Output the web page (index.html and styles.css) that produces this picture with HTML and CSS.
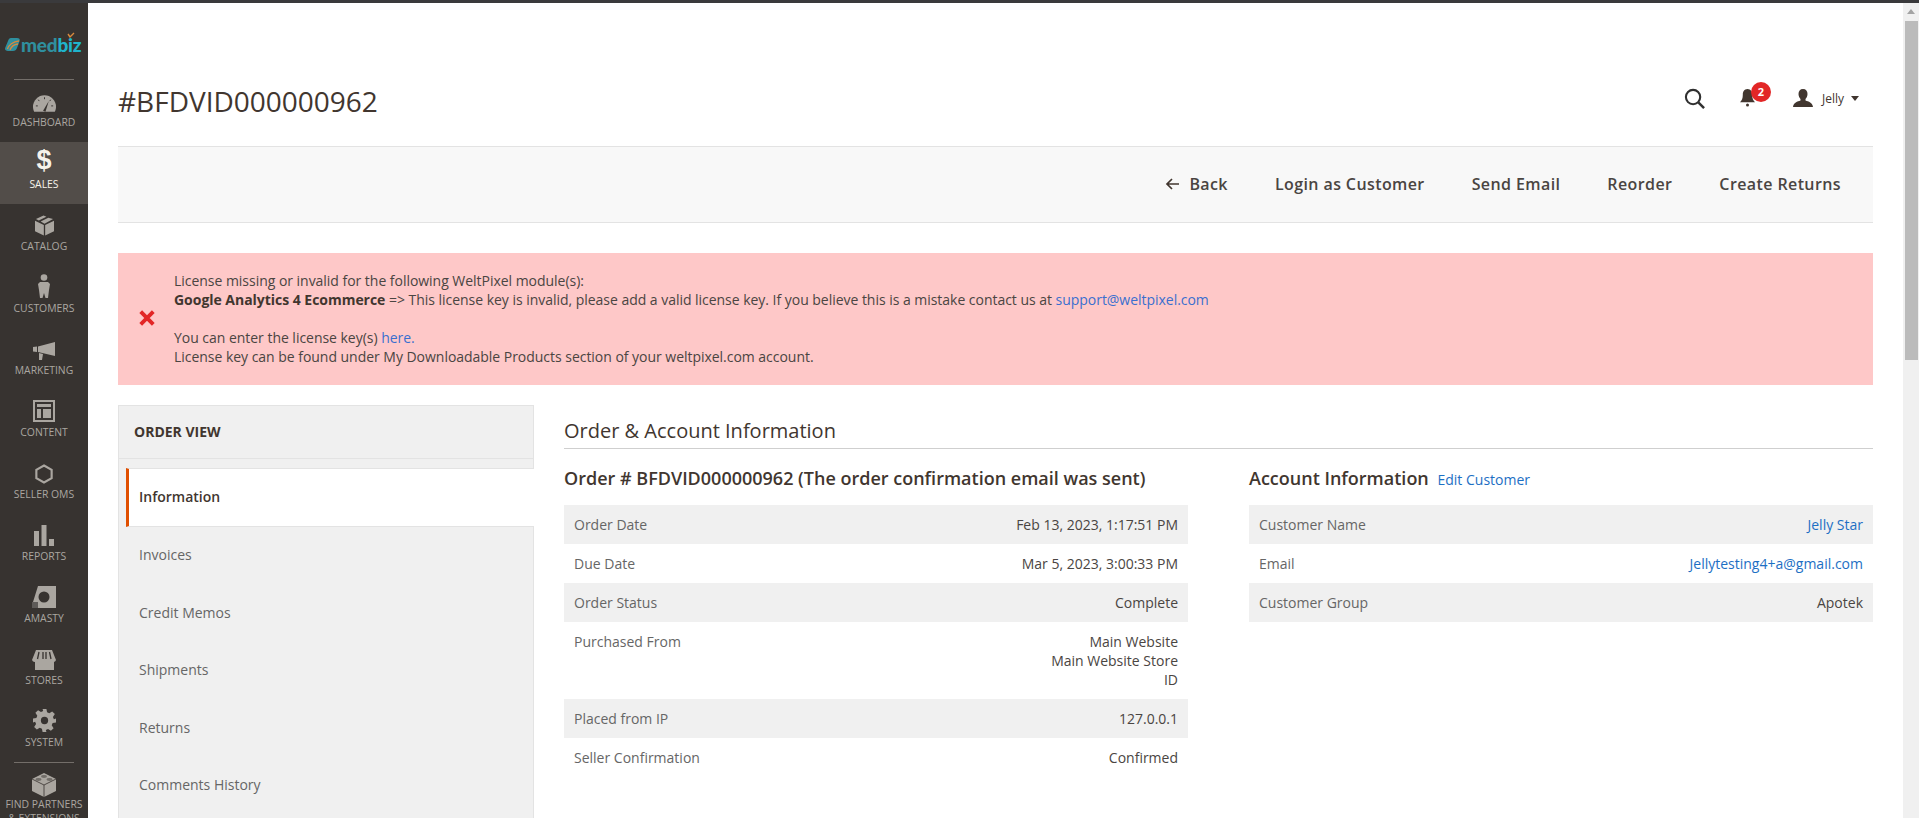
FILE: index.html
```html
<!DOCTYPE html>
<html lang="en">
<head>
<meta charset="utf-8">
<title>#BFDVID000000962</title>
<link rel="stylesheet" href="styles.css">
</head>
<body>
<div class="topline"></div>
<div class="app">
  <nav class="side">
    <div class="logo">
      <svg class="logo-mark" viewBox="0 0 15 13" width="15" height="13"><path d="M6 0h6c2.500 0 3.300 1.500 2.500 3.500L12 10c-.8 2-2 3-4 3H3c-2.500 0-3.500-1.500-2.700-3.500L3 3c.7-2 1.500-3 3-3z" fill="#2f8f9e"/><path d="M2.500 11C3.500 7 8 3.500 14 3M5 12C6 9 9 6.500 13 6" stroke="#d98a3d" stroke-width="1.300" fill="none"/></svg><span class="logo-med">med</span><span class="logo-biz">biz</span>
      <svg class="logo-check" viewBox="0 0 8 6" width="8" height="6"><path d="M1 2l2 3 4-4" stroke="#d98a3d" stroke-width="1.400" fill="none"/></svg>
    </div>
    <div class="rule"></div>
    <a class="nav"><svg viewBox="0 0 24 17" width="23" height="17"><path d="M12 0A12 12 0 0 0 0 12c0 2 .4 3.500 1.200 5h21.600c.8-1.500 1.200-3 1.200-5A12 12 0 0 0 12 0z" fill="#aaa6a0"/><path d="M10.500 16L16.500 6l-3.500 11z" fill="#373330"/><path d="M12 2v2M5.500 4.500l1 1.500M18.500 4.500l-1 1.500M3 11h2M19 11h2" stroke="#373330"/></svg><span>Dashboard</span></a>
    <a class="nav on"><b class="dollar">$</b><span>Sales</span></a>
    <a class="nav"><svg viewBox="0 0 20 22" width="19" height="22"><path d="M0 6.500l9.300 4.500v11L0 17.500zM20 6.500l-9.300 4.500v11l9.300-4.500zM1 4.800L9 1l3 1.400-8 3.900zM6 7.200l8-3.900 5 1.500-9 4.800z" fill="#aaa6a0"/></svg><span>Catalog</span></a>
    <a class="nav"><svg viewBox="0 0 12 24" width="12" height="24"><circle cx="6" cy="3.500" r="3.300" fill="#aaa6a0"/><path d="M2 8h8l2 2-1 6-1 8H7.500L6 19l-1.500 5H2l-1-8-1-6z" fill="#aaa6a0"/></svg><span>Customers</span></a>
    <a class="nav"><svg viewBox="0 0 22 18" width="22" height="18"><path d="M0 5l4-.5V10L0 9.500zM5 4.500L22 0v14L5 10z" fill="#aaa6a0"/><path d="M6 11l4 1-1 6H6z" fill="#aaa6a0"/></svg><span>Marketing</span></a>
    <a class="nav"><svg viewBox="0 0 22 22" width="22" height="22"><path d="M0 0h22v22H0zM2 2v18h18V2zM4 4h14v3H4zM4 9h4v9H4zM10 9h8v9h-8z" fill="#aaa6a0" fill-rule="evenodd"/></svg><span>Content</span></a>
    <a class="nav"><svg viewBox="0 0 20 22" width="18" height="20"><path d="M10 1.500L18.500 6.300v9.400L10 20.500 1.500 15.700V6.300z" fill="none" stroke="#aaa6a0" stroke-width="2.400"/></svg><span>Seller OMS</span></a>
    <a class="nav"><svg viewBox="0 0 20 21" width="20" height="21"><path d="M0 6h5v15H0zM7.500 0h5v21h-5zM15 14h5v7h-5z" fill="#aaa6a0"/></svg><span>Reports</span></a>
    <a class="nav"><svg viewBox="0 0 24 22" width="24" height="22"><path d="M6 0h18v22H4v-6H1z" fill="#aaa6a0"/><circle cx="12" cy="11" r="5.500" fill="#373330"/><path d="M0 16h6v6H0z" fill="#5e5b58"/></svg><span>Amasty</span></a>
    <a class="nav"><svg viewBox="0 0 24 20" width="24" height="20"><path d="M4 0h16l4 10a3 3 0 0 1-2 2v8H3v-8a3 3 0 0 1-3-2z" fill="#aaa6a0"/><path d="M7 2L5.500 9M11 2v7M14 2v7M17.500 2L19 9" stroke="#373330" stroke-width="1.300"/></svg><span>Stores</span></a>
    <a class="nav"><svg viewBox="0 0 24 24" width="23" height="23"><path d="M10 0h4l.7 3.500 2.300 1 3-2 2.800 2.800-2 3 1 2.300L24 10v4l-3.500.7-1 2.300 2 3-2.800 2.800-3-2-2.300 1L14 24h-4l-.7-3.500-2.300-1-3 2L1.200 18.700l2-3-1-2.300L0 14v-4l3.500-.7 1-2.300-2-3L5.300 1.200l3 2 2.300-1z" fill="#aaa6a0"/><circle cx="12" cy="12" r="3.800" fill="#373330"/></svg><span>System</span></a>
    <div class="rule"></div>
    <a class="nav nav-last"><svg viewBox="0 0 24 24" width="24" height="24"><path d="M12 0l12 6v12l-12 6L0 18V6z" fill="#aaa6a0"/><path d="M0 6l12 6 12-6M12 12v12" stroke="#373330" stroke-width=".8" fill="none"/><ellipse cx="12" cy="3.500" rx="3" ry="1.400" fill="#373330" opacity=".5"/><ellipse cx="6.500" cy="6.500" rx="3" ry="1.400" fill="#373330" opacity=".5"/><ellipse cx="17.500" cy="6.500" rx="3" ry="1.400" fill="#373330" opacity=".5"/></svg><span>Find Partners<br>&amp; Extensions</span></a>
  </nav>

  <main class="main">
    <header class="head">
      <h1>#BFDVID000000962</h1>
      <div class="tools">
        <svg class="ic-search" viewBox="0 0 22 22" width="21" height="21"><circle cx="9.500" cy="9.500" r="7.500" fill="none" stroke="#303030" stroke-width="2.200"/><path d="M15 15l6 6" stroke="#303030" stroke-width="2.600"/></svg>
        <div class="bell">
          <svg viewBox="0 0 16 20" width="15" height="19"><path d="M8 1C4.500 1 3 4 3 7c0 4-1 6-3 8h16c-2-2-3-4-3-8 0-3-1.500-6-5-6z" fill="#41362f"/><circle cx="8" cy="18" r="1.600" fill="#41362f"/></svg>
          <span class="badge">2</span>
        </div>
        <div class="user">
          <svg viewBox="0 0 20 18" width="20" height="18"><path d="M10 0c3 0 4.500 2 4.500 5 0 2-1 4-2 5v1.500c3 1 7 2 7.500 6.500H0c.5-4.500 4.500-5.500 7.500-6.500V10c-1-1-2-3-2-5 0-3 1.500-5 4.500-5z" fill="#41362f"/></svg>
          <span class="uname">Jelly</span>
          <i class="caret"></i>
        </div>
      </div>
    </header>

    <div class="actions">
      <a class="back"><svg viewBox="0 0 15 12" width="15" height="12"><path d="M14 6H2M7 1L2 6l5 5" fill="none" stroke="#41362f" stroke-width="1.700"/></svg>Back</a>
      <a>Login as Customer</a>
      <a>Send Email</a>
      <a>Reorder</a>
      <a>Create Returns</a>
    </div>

    <div class="msg">
      <svg class="msg-x" viewBox="0 0 14 14" width="16" height="16"><path d="M1.500 1.500l11 11M12.500 1.500l-11 11" stroke="#e22626" stroke-width="3.400"/></svg>
      <div class="msg-text">
        License missing or invalid for the following WeltPixel module(s):<br>
        <b>Google Analytics 4 Ecommerce</b> =&gt; This license key is invalid, please add a valid license key. If you believe this is a mistake contact us at <a class="mlink">support@weltpixel.com</a><br><br>
        You can enter the license key(s) <a class="mlink">here.</a><br>
        License key can be found under My Downloadable Products section of your weltpixel.com account.
      </div>
    </div>

    <div class="cols">
      <aside class="tabs">
        <div class="tabs-title">Order View</div>
        <a class="tab active">Information</a>
        <a class="tab">Invoices</a>
        <a class="tab">Credit Memos</a>
        <a class="tab">Shipments</a>
        <a class="tab">Returns</a>
        <a class="tab">Comments History</a>
      </aside>
      <section class="content">
        <h2>Order &amp; Account Information</h2>
        <div class="panels">
          <div class="panel">
            <h3>Order # BFDVID000000962 (The order confirmation email was sent)</h3>
            <table>
              <tr><th>Order Date</th><td>Feb 13, 2023, 1:17:51 PM</td></tr>
              <tr><th>Due Date</th><td>Mar 5, 2023, 3:00:33 PM</td></tr>
              <tr><th>Order Status</th><td>Complete</td></tr>
              <tr><th>Purchased From</th><td>Main Website<br>Main Website Store<br>ID</td></tr>
              <tr><th>Placed from IP</th><td>127.0.0.1</td></tr>
              <tr><th>Seller Confirmation</th><td>Confirmed</td></tr>
            </table>
          </div>
          <div class="panel">
            <h3>Account Information <a class="edit">Edit Customer</a></h3>
            <table>
              <tr><th>Customer Name</th><td><a class="link">Jelly Star</a></td></tr>
              <tr><th>Email</th><td><a class="link">Jellytesting4+a@gmail.com</a></td></tr>
              <tr><th>Customer Group</th><td>Apotek</td></tr>
            </table>
          </div>
        </div>
      </section>
    </div>
  </main>

  <div class="scroll"><div class="scroll-up"></div><div class="scroll-thumb"></div></div>
</div>
</body>
</html>
```
FILE: styles.css
```css
* { box-sizing: border-box; }
html, body { margin: 0; height: 100%; overflow: hidden; }
body { font-family: "Open Sans", sans-serif; color: #41362f; background: #fff; font-size: 14px; }
.topline { height: 3px; background: #3a3a3c; }
.app { display: flex; height: 815px; overflow: hidden; }

.side { width: 88px; flex: none; background: #373330; display: flex; flex-direction: column; align-items: stretch; overflow: hidden; }
.logo { height: 76px; flex: none; display: flex; align-items: center; padding: 6px 0 0 5px; font-size: 19px; font-weight: 900; position: relative; letter-spacing: -.2px; font-family: "Lato", sans-serif; }
.logo-mark { margin-right: 1px; flex: none; }
.logo-med { color: #2f8f9e; }
.logo-biz { color: #1fb4cc; }
.logo-check { position: absolute; left: 67px; top: 29px; }
.rule { height: 1px; background: #736e69; margin: 0 14px; flex: none; }
.nav { height: 62px; flex: none; display: flex; flex-direction: column; align-items: center; justify-content: flex-end; padding-bottom: 13px; gap: 3px; color: #aaa6a0; font-size: 10.400px; line-height: 14px; text-transform: uppercase; text-align: center; }
.nav svg { flex: none; }
.nav.on { background: #524d49; color: #f7f3eb; }
.dollar { font-size: 27px; line-height: 28px; font-weight: 700; font-family: "Liberation Sans", sans-serif; color: #f7f3eb; }
.nav-last { height: 80px; justify-content: flex-start; padding: 10px 0 0; gap: 0; }

.main { flex: 1; min-width: 0; padding: 0 30px; }
.head { height: 143px; display: flex; align-items: center; justify-content: space-between; padding-top: 68px; padding-bottom: 15px; }
h1 { margin: 0; font-size: 28px; font-weight: 400; color: #41362f; }
.tools { display: flex; align-items: center; margin-bottom: 6px; }
.ic-search { margin-right: 35px; }
.bell { position: relative; margin-right: 21px; width: 32px; height: 20px; }
.badge { position: absolute; left: 11px; top: -6px; width: 20px; height: 20px; border-radius: 50%; background: #e22626; color: #fff; font-size: 11px; font-weight: 700; text-align: center; line-height: 20px; }
.user { display: flex; align-items: center; margin-right: 14px; }
.uname { font-size: 12px; margin: 0 7px 0 9px; }
.caret { width: 0; height: 0; border: 4px solid transparent; border-top: 5px solid #41362f; border-bottom: 0; }

.actions { height: 77px; padding: 0 32px 2px 0; background: #f8f8f8; border-top: 1px solid #e3e3e3; border-bottom: 1px solid #e3e3e3; display: flex; align-items: center; justify-content: flex-end; gap: 47px; font-size: 16px; font-weight: 600; color: #4a4542; letter-spacing: .4px; }
.back { display: flex; align-items: center; gap: 9px; }

.msg { margin-top: 30px; height: 132px; background: #fec8c8; display: flex; align-items: center; padding: 0 0 2px 21px; font-size: 14px; line-height: 19px; letter-spacing: -.03px; }
.msg-x { margin-right: 19px; flex: none; }
.msg-text { color: #4a4542; }
.msg-text b { font-weight: 700; color: #41362f; }
.mlink { color: #3a6fcf; }

.cols { display: flex; margin-top: 20px; gap: 30px; }
.tabs { width: 416px; flex: none; background: #f0f0f0; border: 1px solid #e3e3e3; border-bottom: 0; height: 420px; font-size: 14px; }
.tabs-title { height: 53px; padding: 0 0 2px 15px; display: flex; align-items: center; font-weight: 700; font-size: 14px; text-transform: uppercase; border-bottom: 1px solid #e3e3e3; color: #41362f; margin-bottom: 9px; }
.tab { display: flex; align-items: center; height: 57.500px; padding: 0 0 2px 20px; color: #666; }
.tab.active { background: #fff; color: #41362f; font-weight: 600; border-left: 3px solid #e04f00; padding-left: 10px; margin-left: 7px; margin-right: -1px; height: 59px; border-top: 1px solid #e3e3e3; border-bottom: 1px solid #e3e3e3; }

.content { flex: 1; min-width: 0; }
h2 { margin: 0; height: 44px; padding-top: 12px; font-size: 20px; font-weight: 400; line-height: 28px; border-bottom: 1px solid #cfcfcf; color: #41362f; }
.panels { display: flex; gap: 61px; }
.panel { flex: 1; min-width: 0; }
h3 { margin: 0; height: 56px; font-size: 18px; font-weight: 600; line-height: 22px; padding-top: 18px; color: #41362f; white-space: nowrap; }
.edit { font-size: 14px; font-weight: 400; color: #1d6fc4; margin-left: 4px; }
table { width: 100%; border-collapse: collapse; font-size: 14px; }
tr:nth-child(odd) { background: #f0f0f0; }
th, td { padding: 10px; line-height: 19px; vertical-align: top; font-weight: 400; }
th { text-align: left; color: #666; }
td { text-align: right; color: #4a4542; }
.link { color: #1d6fc4; }

.scroll { width: 16px; flex: none; background: #f0f0f0; padding: 0 1px 0 2px; }
.scroll-up { height: 18px; position: relative; }
.scroll-up::after { content: ""; position: absolute; left: 2px; top: 6px; border: 4px solid transparent; border-bottom: 5px solid #a3a3a3; border-top: 0; }
.scroll-thumb { height: 339px; background: #bbb; }
```
